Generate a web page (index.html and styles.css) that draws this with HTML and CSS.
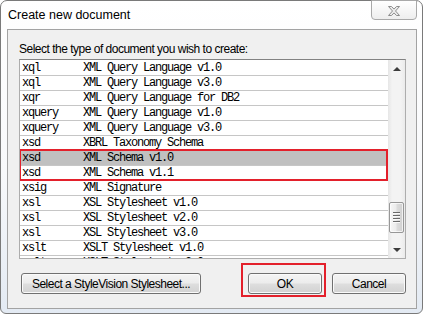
FILE: index.html
```html
<!DOCTYPE html>
<html lang="en">
<head>
    <meta charset="UTF-8">
    <title>Create new document</title>
    <link rel="stylesheet" href="styles.css">
</head>
<body>
    <div class="window">
        <div class="titlebar">
            <span class="title">Create new document</span>
            <div class="close">
                <svg width="12" height="10" viewBox="0 0 12 10">
                    <path d="M0.5 0.5h3l2.5 2.6 2.5-2.6h3l-4 4.5 4 4.5h-3l-2.5-2.6-2.5 2.6h-3l4-4.5z" fill="#ececec" stroke="#8d8d8d" stroke-width="1" stroke-linejoin="round"/>
                </svg>
            </div>
        </div>

        <div class="client">
            <div class="prompt">Select the type of document you wish to create:</div>

            <div class="listbox">
                <div class="rows">
                    <div class="row"><span>xql</span><span>XML Query Language v1.0</span></div>
                    <div class="row"><span>xql</span><span>XML Query Language v3.0</span></div>
                    <div class="row"><span>xqr</span><span>XML Query Language for DB2</span></div>
                    <div class="row"><span>xquery</span><span>XML Query Language v1.0</span></div>
                    <div class="row"><span>xquery</span><span>XML Query Language v3.0</span></div>
                    <div class="row"><span>xsd</span><span>XBRL Taxonomy Schema</span></div>
                    <div class="row selected"><span>xsd</span><span>XML Schema v1.0</span></div>
                    <div class="row"><span>xsd</span><span>XML Schema v1.1</span></div>
                    <div class="row"><span>xsig</span><span>XML Signature</span></div>
                    <div class="row"><span>xsl</span><span>XSL Stylesheet v1.0</span></div>
                    <div class="row"><span>xsl</span><span>XSL Stylesheet v2.0</span></div>
                    <div class="row"><span>xsl</span><span>XSL Stylesheet v3.0</span></div>
                    <div class="row"><span>xslt</span><span>XSLT Stylesheet v1.0</span></div>
                    <div class="row"><span>xslt</span><span>XSLT Stylesheet v2.0</span></div>
                </div>
                <div class="scrollbar">
                    <div class="arrow-btn"><span class="arrow up"></span></div>
                    <div class="track">
                        <div class="thumb"><i></i><i></i><i></i><i></i></div>
                    </div>
                    <div class="arrow-btn"><span class="arrow down"></span></div>
                </div>
                <!-- highlight around the xsd rows -->
                <div class="mark mark-rows"></div>
            </div>

            <div class="buttons">
                <button class="btn btn-wide">Select a StyleVision Stylesheet...</button>
                <div class="ok-wrap">
                    <button class="btn">OK</button>
                    <div class="mark mark-ok"></div>
                </div>
                <button class="btn">Cancel</button>
            </div>
        </div>
    </div>
</body>
</html>
```

FILE: styles.css
```css
body {
    margin: 0;
    background: #ffffff;
    font-family: "Liberation Sans", Arial, sans-serif;
}

.window {
    width: 423px;
    height: 314px;
    box-sizing: border-box;
    border: 1px solid #7a7a7a;
    border-radius: 7px 7px 6px 6px;
    padding: 0 5px 4px 6px;
    background: linear-gradient(to bottom, #ffffff 0%, #f8f9fb 55%, #e3eaf3 100%);
}

.titlebar {
    height: 28px;
    display: flex;
    justify-content: space-between;
    align-items: flex-start;
}

.title {
    padding-left: 1px;
    line-height: 28px;
    font-size: 12.5px;
    color: #000;
}

.close {
    width: 46px;
    height: 20px;
    box-sizing: border-box;
    margin-top: -1px;
    border: 1px solid #a9a9a9;
    border-radius: 0 0 4px 4px;
    background: linear-gradient(to bottom, #ffffff, #eeeeee);
    display: flex;
    justify-content: center;
    align-items: center;
    padding-top: 2px;
}

.client {
    height: 280px;
    box-sizing: border-box;
    border: 1px solid #a3a3a3;
    background: #f0f0f0;
    padding: 12px 10px 0 11px;
}

.prompt {
    font-size: 12px;
    line-height: 14px;
    letter-spacing: -0.5px;
    color: #000;
    margin-bottom: 3px;
}

/* List box */
.listbox {
    position: relative;
    height: 200px;
    box-sizing: border-box;
    border: 1px solid #adadad;
    border-top-color: #828282;
    background: #fff;
    display: flex;
    overflow: hidden;
}

.rows {
    flex: 1;
    padding-top: 1px;
    overflow: hidden;
}

.row {
    display: grid;
    grid-template-columns: 61px 1fr;
    padding-left: 2px;
    height: 14px;
    line-height: 14px;
    border-bottom: 1px solid #c6c6c6;
    font-family: "Liberation Mono", "Courier New", monospace;
    font-size: 12px;
    letter-spacing: -1.2px;
    color: #000;
    white-space: nowrap;
}

.row.selected {
    background: #c0c0c0;
}

.scrollbar {
    width: 17px;
    display: flex;
    flex-direction: column;
    background: linear-gradient(to right, #e6e6e6 0%, #f3f3f3 25%, #f3f3f3 75%, #ebebeb 100%);
}

.arrow-btn {
    height: 17px;
    display: flex;
    justify-content: center;
    align-items: center;
}

.arrow {
    width: 0;
    height: 0;
    border-left: 4px solid transparent;
    border-right: 4px solid transparent;
}

.arrow.up {
    border-bottom: 4px solid #3c3c3c;
}

.arrow.down {
    border-top: 4px solid #3c3c3c;
}

.track {
    flex: 1;
    padding: 0 1px;
}

.thumb {
    margin-top: 125px;
    height: 31px;
    box-sizing: border-box;
    border: 1px solid #979797;
    border-radius: 2px;
    background: linear-gradient(to right, #f7f7f7 0%, #ececec 45%, #dcdcdc 55%, #d0d0d0 100%);
    box-shadow: inset 0 0 0 1px rgba(255,255,255,0.7);
    display: flex;
    flex-direction: column;
    align-items: center;
    justify-content: center;
    gap: 1px;
}

.thumb i {
    display: block;
    width: 7px;
    height: 1px;
    background: #6a6a6a;
    border-bottom: 1px solid #fafafa;
}

/* red callouts */
.mark {
    position: absolute;
    box-sizing: border-box;
    border: 2px solid #e3202b;
    pointer-events: none;
}

.mark-rows {
    left: -1px;
    top: 89px;
    width: 369px;
    height: 32px;
}

.mark-ok {
    left: -7px;
    top: -10px;
    width: 85px;
    height: 34px;
}

/* Buttons */
.buttons {
    display: flex;
    align-items: center;
    gap: 10px;
    margin-top: 14px;
    padding-left: 2px;
}

.ok-wrap {
    position: relative;
    margin-left: auto;
    display: flex;
}

.btn {
    width: 74px;
    height: 21px;
    box-sizing: border-box;
    padding: 0;
    border: 1px solid #707070;
    border-radius: 3px;
    background: linear-gradient(to bottom, #f4f4f4 0%, #ececec 48%, #dedede 52%, #d2d2d2 100%);
    box-shadow: inset 0 0 0 1px #fafafa;
    font-family: "Liberation Sans", Arial, sans-serif;
    font-size: 12px;
    letter-spacing: -0.5px;
    color: #000;
}

.btn-wide {
    width: 180px;
}
```
